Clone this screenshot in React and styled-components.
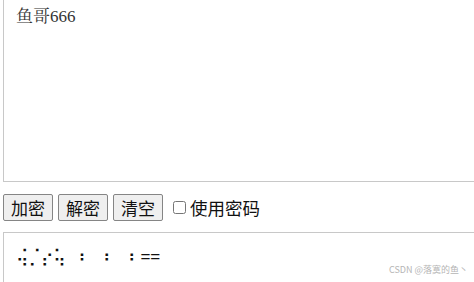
import React, { useState } from 'react';
import styled, { createGlobalStyle } from 'styled-components';

const GlobalStyle = createGlobalStyle`
  html, body {
    margin: 0;
    padding: 0;
    background: #fff;
    overflow: hidden;
  }
  body {
    font-family: "Noto Sans CJK SC", "Noto Sans", sans-serif;
  }
`;

const Page = styled.div`
  position: relative;
  width: 474px;
  height: 282px;
  padding-left: 3px;
  box-sizing: border-box;
  overflow: hidden;
`;

const Input = styled.textarea`
  display: block;
  width: 520px;
  height: 182px;
  margin: 0;
  padding: 6px 12px;
  box-sizing: border-box;
  border: 1px solid #c8c8c8;
  border-top-width: 0;
  resize: none;
  outline: none;
  color: #333;
  font-family: "Liberation Serif", "Noto Serif CJK SC", "Noto Sans CJK SC", serif;
  font-size: 17px;
  line-height: 22px;
`;

const Toolbar = styled.div`
  display: flex;
  align-items: center;
  gap: 5px;
  margin-top: 12px;
  height: 27px;
`;

const Button = styled.button`
  height: 27px;
  padding: 0 7px;
  margin: 0;
  border: 1px solid #858585;
  border-radius: 2px;
  background: #efefef;
  color: #111;
  font-family: "Noto Sans CJK SC", sans-serif;
  font-size: 17px;
  line-height: 25px;
`;

const Check = styled.label`
  display: flex;
  align-items: center;
  gap: 4px;
  margin-left: 5px;
  font-size: 17.5px;
  color: #111;

  input {
    width: 13px;
    height: 13px;
    margin: 0;
  }
`;

const Output = styled.div`
  margin-top: 11px;
  width: 520px;
  height: 80px;
  box-sizing: border-box;
  padding: 11px 12px;
  border: 1px solid #c8c8c8;
  font-family: "DejaVu Sans", sans-serif;
  font-size: 17px;
  line-height: 24px;
  word-spacing: 7px;
  color: #111;
  white-space: pre;
`;

const Tail = styled.span`
  font-family: "Liberation Sans", sans-serif;
  font-size: 17px;
  word-spacing: 0;
`;

const Mark = styled.div`
  position: absolute;
  right: 6px;
  bottom: 6px;
  font-family: "Noto Sans CJK SC", sans-serif;
  font-size: 9px;
  color: #b5b5b5;
`;

export default function App() {
  const [text, setText] = useState('鱼哥666');
  return (
    <Page>
      <GlobalStyle />
      <Input value={text} onChange={e => setText(e.target.value)} />
      <Toolbar>
        <Button>加密</Button>
        <Button>解密</Button>
        <Button>清空</Button>
        <Check>
          <input type="checkbox" />
          使用密码
        </Check>
      </Toolbar>
      <Output>
        {'⢬⡈⡔⢥ ⠆ ⠆ ⠆'}
        <Tail>==</Tail>
      </Output>
      <Mark>CSDN @落寞的鱼丶</Mark>
    </Page>
  );
}
